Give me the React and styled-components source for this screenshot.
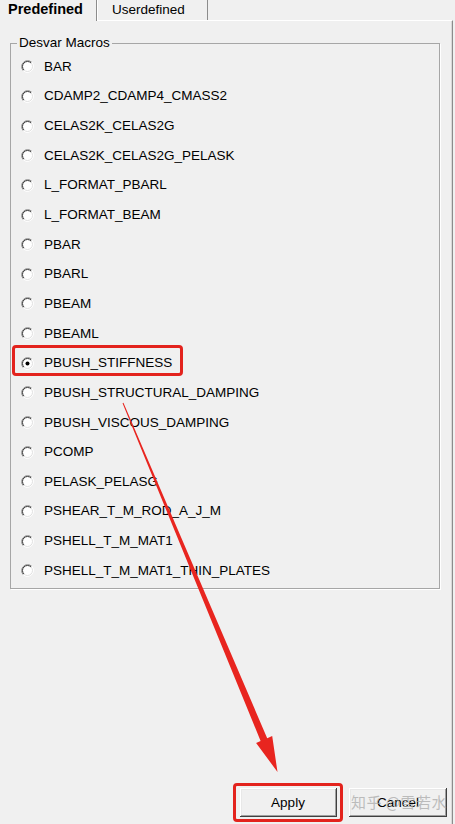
import React from "react";
import styled, { createGlobalStyle } from "styled-components";

const GlobalStyle = createGlobalStyle`
  html, body {
    margin: 0;
    padding: 0;
    background: #f0f0f0;
    overflow: hidden;
  }
  body {
    font-family: "Liberation Sans", Arial, sans-serif;
    color: #000;
  }
`;

const macros = [
  "BAR",
  "CDAMP2_CDAMP4_CMASS2",
  "CELAS2K_CELAS2G",
  "CELAS2K_CELAS2G_PELASK",
  "L_FORMAT_PBARL",
  "L_FORMAT_BEAM",
  "PBAR",
  "PBARL",
  "PBEAM",
  "PBEAML",
  "PBUSH_STIFFNESS",
  "PBUSH_STRUCTURAL_DAMPING",
  "PBUSH_VISCOUS_DAMPING",
  "PCOMP",
  "PELASK_PELASG",
  "PSHEAR_T_M_ROD_A_J_M",
  "PSHELL_T_M_MAT1",
  "PSHELL_T_M_MAT1_THIN_PLATES",
];

const Window = styled.div`
  position: relative;
  width: 455px;
  height: 824px;
  display: flex;
  flex-direction: column;
  background: #f0f0f0;
  font-size: 13.5px;
`;

const TabStrip = styled.div`
  display: flex;
  align-items: flex-end;
  height: 20px;
  width: 453px;
`;

const Tab = styled.div`
  box-sizing: border-box;
  height: ${(p) => (p.$active ? "21px" : "20px")};
  width: ${(p) => p.$width}px;
  padding-left: ${(p) => p.$pad}px;
  padding-top: ${(p) => (p.$active ? "1px" : "2px")};
  margin-bottom: ${(p) => (p.$active ? "-1px" : "0")};
  font-weight: ${(p) => (p.$active ? 700 : 400)};
  font-size: ${(p) => (p.$active ? "14.5px" : "13.5px")};
  line-height: 16px;
  background: #f0f0f0;
  border-right: 1px solid #8c8c8c;
  border-left: ${(p) => (p.$active ? "none" : "1px solid #ffffff")};
  position: relative;
  z-index: ${(p) => (p.$active ? 2 : 1)};
`;

const Panel = styled.div`
  box-sizing: border-box;
  flex: 1;
  width: 453px;
  display: flex;
  flex-direction: column;
  border-top: 1px solid #ffffff;
  border-right: 1px solid #8c8c8c;
  box-shadow: inset -1px 0 0 #d8d8d8;
  padding-top: 14px;
`;

const GroupBox = styled.fieldset`
  margin: 0 12px 0 10px;
  padding: 0;
  min-width: 0;
  border: 1px solid #a6a6a6;
  box-shadow: 1px 1px 0 #ffffff;
`;

const Legend = styled.legend`
  margin-left: 6px;
  padding: 0 2px;
  font-size: 13.5px;
  line-height: 16px;
`;

const List = styled.div`
  display: flex;
  flex-direction: column;
  padding: 1px 0 2px 10px;
`;

const Row = styled.label`
  position: relative;
  display: flex;
  align-items: center;
  gap: 10px;
  height: 29.65px;
  line-height: 16px;
  white-space: nowrap;
`;

const Highlight = styled.span`
  position: absolute;
  left: -9px;
  top: -3px;
  width: 165px;
  height: 25px;
  border: 3px solid #e3231d;
  border-radius: 4px;
  pointer-events: none;
`;

const Footer = styled.div`
  margin-top: auto;
  display: flex;
  justify-content: flex-end;
  align-items: center;
  gap: 6px;
  padding: 0 5px 2px 0;
`;

const Marked = styled.div`
  border: 3px solid #e3231d;
  border-radius: 4px;
  padding: 2px 3.5px;
`;

const Button = styled.button`
  position: relative;
  box-sizing: border-box;
  width: ${(p) => p.$width}px;
  height: 29px;
  margin: 0;
  padding: 0;
  font-family: "Liberation Sans", Arial, sans-serif;
  font-size: 13.5px;
  color: #000;
  background: #f0f0f0;
  border: none;
  box-shadow: inset -1px -1px 0 #404040, inset 1px 1px 0 #ffffff,
    inset -2px -2px 0 #a0a0a0, inset 2px 2px 0 #e8e8e8;
`;

const Watermark = styled.span`
  position: absolute;
  left: 2px;
  top: 5px;
  font-family: "Noto Sans CJK SC", sans-serif;
  font-size: 15px;
  line-height: 18px;
  letter-spacing: 0.5px;
  color: rgba(170, 170, 170, 0.75);
  white-space: nowrap;
  pointer-events: none;
`;

const Overlay = styled.svg`
  position: absolute;
  left: 0;
  top: 0;
  pointer-events: none;
  z-index: 5;
`;

function Radio({ checked }) {
  return (
    <svg width="13" height="13" viewBox="0 0 13 13" style={{ flex: "none" }}>
      <circle cx="6.5" cy="6.5" r="6" fill="#ffffff" />
      <path d="M2.26 10.74 A6 6 0 0 1 10.74 2.26" fill="none" stroke="#8a8a8a" strokeWidth="1" />
      <path d="M2.96 10.04 A5 5 0 0 1 10.04 2.96" fill="none" stroke="#3c3c3c" strokeWidth="1" />
      <path d="M10.74 2.26 A6 6 0 0 1 2.26 10.74" fill="none" stroke="#ffffff" strokeWidth="1" />
      <path d="M10.04 2.96 A5 5 0 0 1 2.96 10.04" fill="none" stroke="#e0e0e0" strokeWidth="1" />
      {checked && <circle cx="6.5" cy="6.5" r="2" fill="#000" />}
    </svg>
  );
}

export default function App() {
  const selected = "PBUSH_STIFFNESS";

  return (
    <Window>
      <GlobalStyle />
      <TabStrip>
        <Tab $active $width={97} $pad={8}>
          Predefined
        </Tab>
        <Tab $width={111} $pad={14}>
          Userdefined
        </Tab>
      </TabStrip>
      <Panel>
        <GroupBox>
          <Legend>Desvar Macros</Legend>
          <List>
            {macros.map((name) => (
              <Row key={name}>
                <Radio checked={name === selected} />
                <span>{name}</span>
                {name === selected && <Highlight />}
              </Row>
            ))}
          </List>
        </GroupBox>
        <Footer>
          <Marked>
            <Button $width={97}>Apply</Button>
          </Marked>
          <Button $width={98}>
            Cancel
            <Watermark>知乎 @雪若水</Watermark>
          </Button>
        </Footer>
      </Panel>
      <Overlay width="455" height="824" viewBox="0 0 455 824">
        <polygon
          fill="#e8251f"
          points="123.45,402.81 267.2,738.2 272.2,736.1 277.5,772 256.1,742.9 260.6,741.0 122.55,403.19"
        />
      </Overlay>
    </Window>
  );
}
